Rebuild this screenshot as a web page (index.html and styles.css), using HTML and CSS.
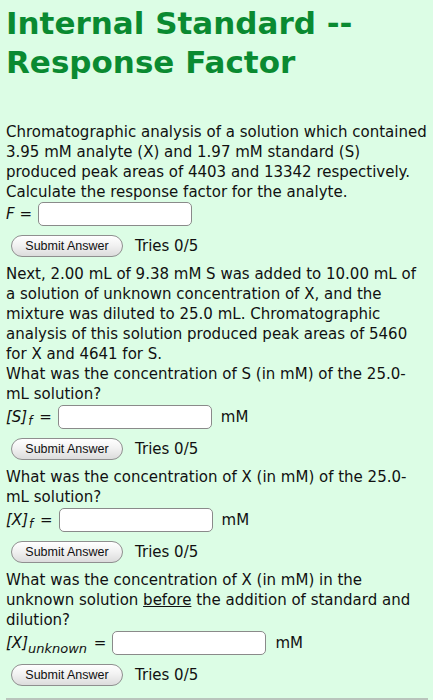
FILE: index.html
```html
<!DOCTYPE html>
<html lang="en">
<head>
    <meta charset="UTF-8">
    <meta name="viewport" content="width=device-width, initial-scale=1.0">
    <title>Internal Standard -- Response Factor</title>
    <link rel="stylesheet" href="styles.css">
</head>
<body>
    <h1 class="title">Internal Standard --<br>Response Factor</h1>

    <p class="text">Chromatographic analysis of a solution which contained 3.95 mM analyte (X) and 1.97 mM standard (S) produced peak areas of 4403 and 13342 respectively. Calculate the response factor for the analyte.</p>
    <div class="answer-row">
        <span class="label"><i>F</i> =</span>
        <input class="answer answer-f" type="text">
    </div>
    <div class="submit-row">
        <button class="submit">Submit Answer</button>
        <span class="tries">Tries 0/5</span>
    </div>

    <p class="text">Next, 2.00 mL of 9.38 mM S was added to 10.00 mL of a solution of unknown concentration of X, and the mixture was diluted to 25.0 mL. Chromatographic analysis of this solution produced peak areas of 5460 for X and 4641 for S.<br>What was the concentration of S (in mM) of the 25.0-mL solution?</p>
    <div class="answer-row">
        <span class="label"><i>[S]<sub>f</sub></i> =</span>
        <input class="answer" type="text">
        <span class="unit">mM</span>
    </div>
    <div class="submit-row">
        <button class="submit">Submit Answer</button>
        <span class="tries">Tries 0/5</span>
    </div>

    <p class="text">What was the concentration of X (in mM) of the 25.0-mL solution?</p>
    <div class="answer-row">
        <span class="label"><i>[X]<sub>f</sub></i> =</span>
        <input class="answer" type="text">
        <span class="unit">mM</span>
    </div>
    <div class="submit-row">
        <button class="submit">Submit Answer</button>
        <span class="tries">Tries 0/5</span>
    </div>

    <p class="text">What was the concentration of X (in mM) in the unknown solution <span class="underline">before</span> the addition of standard and dilution?</p>
    <div class="answer-row">
        <span class="label"><i>[X]<sub class="long">unknown</sub></i> =</span>
        <input class="answer" type="text">
        <span class="unit">mM</span>
    </div>
    <div class="submit-row">
        <button class="submit">Submit Answer</button>
        <span class="tries">Tries 0/5</span>
    </div>

    <hr class="rule">
</body>
</html>
```

FILE: styles.css
```css
body { margin: 0 5px 0 6px; background: #dcfde5; color: #111; font-family: "DejaVu Sans", Verdana, sans-serif; font-size: 15px; line-height: 20px; }
.title { margin: 4px 0 40px; font-size: 31px; line-height: 39px; font-weight: bold; color: #0a8a31; }
.text { margin: 0; }
.underline { text-decoration: underline; }
.answer-row { display: flex; align-items: center; height: 24px; margin-top: 1px; }
.answer-row:first-of-type { margin-top: 0; }
.label { margin-right: 6px; white-space: nowrap; }
.label sub { margin: 0 2px 0 1px; font-size: 12px; line-height: 0; vertical-align: -3px; }
.label sub.long { margin-left: 0; font-size: 13px; vertical-align: -5px; }
.answer { box-sizing: border-box; width: 154px; height: 24px; margin: 0; padding: 2px 5px; border: 1px solid #8a8a8a; border-radius: 5px; background: #fff; }
.unit { margin-left: 9px; }
.submit-row { display: flex; align-items: center; height: 22px; margin: 9px 0 7px 5px; }
.submit { box-sizing: border-box; width: 112px; height: 22px; padding: 0; border: 1px solid #8f8f8f; border-radius: 11px;
          background: linear-gradient(#ffffff, #f2f2f2 45%, #dcdcdc); font-family: "Liberation Sans", Arial, sans-serif; font-size: 12.5px; color: #111; }
.tries { margin-left: 12px; }
.rule { margin: 12px 0 0 -1px; border: none; border-top: 2px solid #b9c4bc; }
```
